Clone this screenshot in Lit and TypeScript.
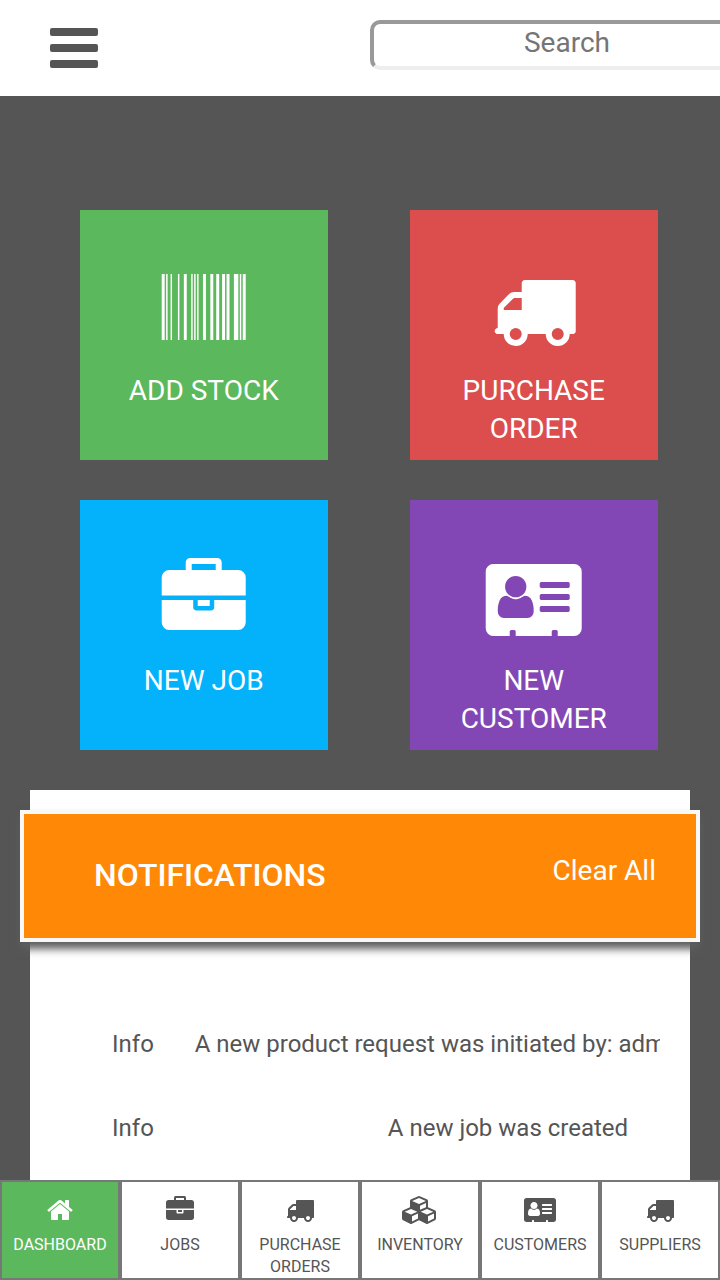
import { LitElement, html, css, svg } from "lit";
import { customElement, property } from "lit/decorators.js";

interface Glyph {
  width: number;
  path: string;
}

const barcodeBars: Array<[number, number]> = [
  [0, 63], [94, 126], [189, 220], [346, 377], [472, 534], [629, 660], [692, 723],
  [755, 786], [880, 943], [1037, 1100], [1163, 1226], [1288, 1351], [1383, 1446],
  [1540, 1634], [1666, 1697], [1729, 1792],
];

const glyphs: Record<string, Glyph> = {
  barcode: {
    width: 1792,
    path: barcodeBars.map(([a, b]) => `M${a} 128H${b}V1536H${a}z`).join(""),
  },
  truck: {
    width: 1792,
    path: "M640 1408q0-52-38-90t-90-38-90 38-38 90 38 90 90 38 90-38 38-90zm-384-512h384v-256h-158q-13 0-22 9l-195 195q-9 9-9 22v30zm1280 512q0-52-38-90t-90-38-90 38-38 90 38 90 90 38 90-38 38-90zm256-1088v1024q0 15-4 26.500t-13.500 18.500-16.500 11.500-23.500 6-22.500 2-25.500 0-22.500-.5q0 106-75 181t-181 75-181-75-75-181h-384q0 106-75 181t-181 75-181-75-75-181h-64q-3 0-22.500.5t-25.500 0-22.500-2-23.500-6-16.500-11.500-13.500-18.500-4-26.500q0-26 19-45t45-19v-320q0-8-.5-35t0-38 2.500-34.500 6.500-37 14-30.500 22.500-30l198-198q19-19 50.500-32t58.500-13h160v-192q0-26 19-45t45-19h1024q26 0 45 19t19 45z",
  },
  briefcase: {
    width: 1792,
    path: "M640 256h512v-128h-512v128zm1152 640v480q0 66-47 113t-113 47h-1472q-66 0-113-47t-47-113v-480h672v160q0 26 19 45t45 19h320q26 0 45-19t19-45v-160h672zm-768 0v128h-256v-128h256zm768-480v384h-1792v-384q0-66 47-113t113-47h352v-160q0-40 28-68t68-28h576q40 0 68 28t28 68v160h352q66 0 113 47t47 113z",
  },
  card: {
    width: 2048,
    path:
      "M1024 1131q0-64-9-117.500t-29.500-103-60.500-78-97-28.500q-6 4-30 18t-37.500 21.500-35.500 17.500-43 14.500-42 4.500-42-4.500-43-14.500-35.500-17.500-37.500-21.500-30-18q-57 0-97 28.500t-60.500 78-29.500 103-9 117.500 37 106.500 91 42.500h512q54 0 91-42.500t37-106.500z" +
      "M867 611q0-94-66.500-160.500t-160.500-66.500-160.500 66.500-66.500 160.500 66.500 160.500 160.500 66.500 160.500-66.500 66.500-160.500z" +
      [640, 896, 1152]
        .map((y) => `M1792 ${y - 32}v-64q0-14-9-23t-23-9h-576q-14 0-23 9t-9 23v64q0 14 9 23t23 9h576q14 0 23-9t9-23z`)
        .join("") +
      "M2048 288v1216q0 66-47 113t-113 47h-352v-96q0-14-9-23t-23-9h-64q-14 0-23 9t-9 23v96h-768v-96q0-14-9-23t-23-9h-64q-14 0-23 9t-9 23v96h-352q-66 0-113-47t-47-113v-1216q0-66 47-113t113-47h1728q66 0 113 47t47 113z",
  },
  home: {
    width: 1792,
    path: "M1472 992v480q0 26-19 45t-45 19h-384v-384h-256v384h-384q-26 0-45-19t-19-45v-480q0-1 .5-3t.5-3l575-474 575 474q1 2 1 6zm223-69l-62 74q-8 9-21 11h-3q-13 0-21-7l-692-577-692 577q-12 8-24 7-13-2-21-11l-62-74q-8-10-7-23.500t11-21.500l719-599q32-26 76-26t76 26l244 204v-195q0-14 9-23t23-9h192q14 0 23 9t9 23v408l219 182q10 8 11 21.500t-7 23.500z",
  },
  cubes: {
    width: 2304,
    path: "M640 1632l384-192v-314l-384 164v342zm-64-454l404-173-404-173-404 173zm1088 454l384-192v-314l-384 164v342zm-64-454l404-173-404-173-404 173zm-448-293l384-165v-266l-384 164v267zm-64-379l441-189-441-189-441 189zm1088 518v416q0 36-19 67t-52 47l-448 224q-25 14-57 14t-57-14l-448-224q-4-2-7-4-2 2-7 4l-448 224q-25 14-57 14t-57-14l-448-224q-33-16-52-47t-19-67v-416q0-38 21.500-70t56.500-48l434-186v-400q0-38 21.500-70t56.500-48l448-192q23-10 50-10t50 10l448 192q35 16 56.500 48t21.500 70v400l434 186q36 16 57 48t21 70z",
  },
};

@customElement("glyph-icon")
class GlyphIcon extends LitElement {
  @property() name = "truck";
  @property({ type: Number }) shift = 0;

  static styles = css`
    :host { display: block; height: 1em; line-height: 0; }
    .icon { display: block; height: 1em; fill: currentColor; overflow: visible; }
  `;

  render() {
    const g = glyphs[this.name];
    return html`<svg class="icon" viewBox="0 0 ${g.width} 1792" aria-hidden="true">
      ${svg`<path fill-rule="evenodd" transform="translate(${this.shift} 0)" d=${g.path}></path>`}
    </svg>`;
  }
}

@customElement("action-tile")
class ActionTile extends LitElement {
  @property() icon = "";
  @property() label = "";

  static styles = css`
    :host {
      display: flex;
      flex-direction: column;
      align-items: center;
      box-sizing: border-box;
      height: 250px;
      padding: 58px 40px 0;
      color: #fff;
    }
    .icon { font-size: 84px; }
    .label { margin-top: 20px; font-size: 28px; line-height: 38px; text-align: center; }
  `;

  render() {
    return html`<glyph-icon class="icon" name=${this.icon} shift="-6"></glyph-icon>
      <div class="label">${this.label}</div>`;
  }
}

const tiles = [
  { icon: "barcode", label: "ADD STOCK", tone: "green" },
  { icon: "truck", label: "PURCHASE ORDER", tone: "red" },
  { icon: "briefcase", label: "NEW JOB", tone: "blue" },
  { icon: "card", label: "NEW CUSTOMER", tone: "purple" },
];

const notes = [
  { kind: "Info", text: "A new product request was initiated by: admin", fit: "long" },
  { kind: "Info", text: "A new job was created", fit: "short" },
];

const tabs = [
  { icon: "home", label: "DASHBOARD", state: "active" },
  { icon: "briefcase", label: "JOBS", state: "" },
  { icon: "truck", label: "PURCHASE ORDERS", state: "" },
  { icon: "cubes", label: "INVENTORY", state: "" },
  { icon: "card", label: "CUSTOMERS", state: "" },
  { icon: "truck", label: "SUPPLIERS", state: "" },
];

@customElement("app-root")
class AppRoot extends LitElement {
  static styles = css`
    :host {
      display: flex;
      flex-direction: column;
      width: 720px;
      height: 1280px;
      overflow: hidden;
      background: #555;
      color: #555;
      font-family: Roboto, sans-serif;
    }
    .topbar {
      display: flex;
      flex: none;
      box-sizing: border-box;
      height: 96px;
      padding: 20px 0 0 50px;
      background: #fff;
    }
    .menu { display: block; flex: none; width: 48px; height: 40px; margin: 8px 272px 0 0; fill: #555; }
    .search {
      flex: none;
      box-sizing: border-box;
      width: 394px;
      height: 50px;
      padding: 0 0 6px;
      border: 4px solid;
      border-color: #999 #eee #eee #999;
      border-radius: 10px;
      background: #fff;
      font: 28px Roboto, sans-serif;
      text-align: center;
      outline: none;
    }
    .search::placeholder { color: #757575; opacity: 1; }
    .main { flex: 1; min-height: 0; overflow: hidden; padding-top: 114px; }
    .tiles {
      display: grid;
      grid-template-columns: 247.5px 247.5px;
      gap: 40px 82.5px;
      padding-left: 80px;
    }
    .green { background: #5cb85c; }
    .red { background: #dc4d4d; }
    .blue { background: #03b2fb; }
    .purple { background: #8347b5; }
    .panel { height: 500px; margin: 40px 30px 0; padding-top: 20px; background: #fff; }
    .heading {
      display: flex;
      justify-content: space-between;
      box-sizing: border-box;
      height: 132px;
      margin: 0 -10px;
      padding: 0 40px 0 70px;
      border: 4px solid #f8f8f8;
      background: #ff8806;
      color: #fff;
      box-shadow: 0 7px 8px #5e5e5e;
    }
    .title { margin: 42px 0 0; font-size: 32px; line-height: 38px; font-weight: 500; letter-spacing: -0.04px; }
    .clear { margin-top: 38px; font-size: 28px; line-height: 38px; }
    .list { margin: 60px 30px 0 82px; overflow: hidden; font-size: 24px; line-height: 84px; }
    .row { display: grid; grid-template-columns: 82.7px 626.6px; white-space: nowrap; }
    .short { text-align: center; }
    .tabs { display: grid; flex: none; grid-template-columns: repeat(6, 120px); height: 100px; }
    .tab {
      display: flex;
      flex-direction: column;
      align-items: center;
      box-sizing: border-box;
      padding-top: 14px;
      border: 2px solid #777;
      background: #fff;
      font-size: 16px;
      line-height: 22px;
      text-align: center;
    }
    .active { background: #5cb85c; color: #fff; }
    .tabicon { font-size: 28px; margin-bottom: 10px; }
  `;

  render() {
    return html`
      <header class="topbar">
        <svg class="menu" viewBox="0 0 48 40" aria-label="Menu">
          <rect width="48" height="8" rx="2"></rect>
          <rect y="16" width="48" height="8" rx="2"></rect>
          <rect y="32" width="48" height="8" rx="2"></rect>
        </svg>
        <input class="search" placeholder="Search" />
      </header>
      <main class="main">
        <section class="tiles">
          ${tiles.map((t) => html`<action-tile class=${t.tone} icon=${t.icon} label=${t.label}></action-tile>`)}
        </section>
        <section class="panel">
          <div class="heading">
            <h2 class="title">NOTIFICATIONS</h2>
            <span class="clear">Clear All</span>
          </div>
          <div class="list">
            ${notes.map((n) => html`<div class="row"><span>${n.kind}</span><span class=${n.fit}>${n.text}</span></div>`)}
          </div>
        </section>
      </main>
      <nav class="tabs">
        ${tabs.map((t) => html`<div class="tab ${t.state}">
          <glyph-icon class="tabicon" name=${t.icon}></glyph-icon>
          <span>${t.label}</span>
        </div>`)}
      </nav>
    `;
  }
}
